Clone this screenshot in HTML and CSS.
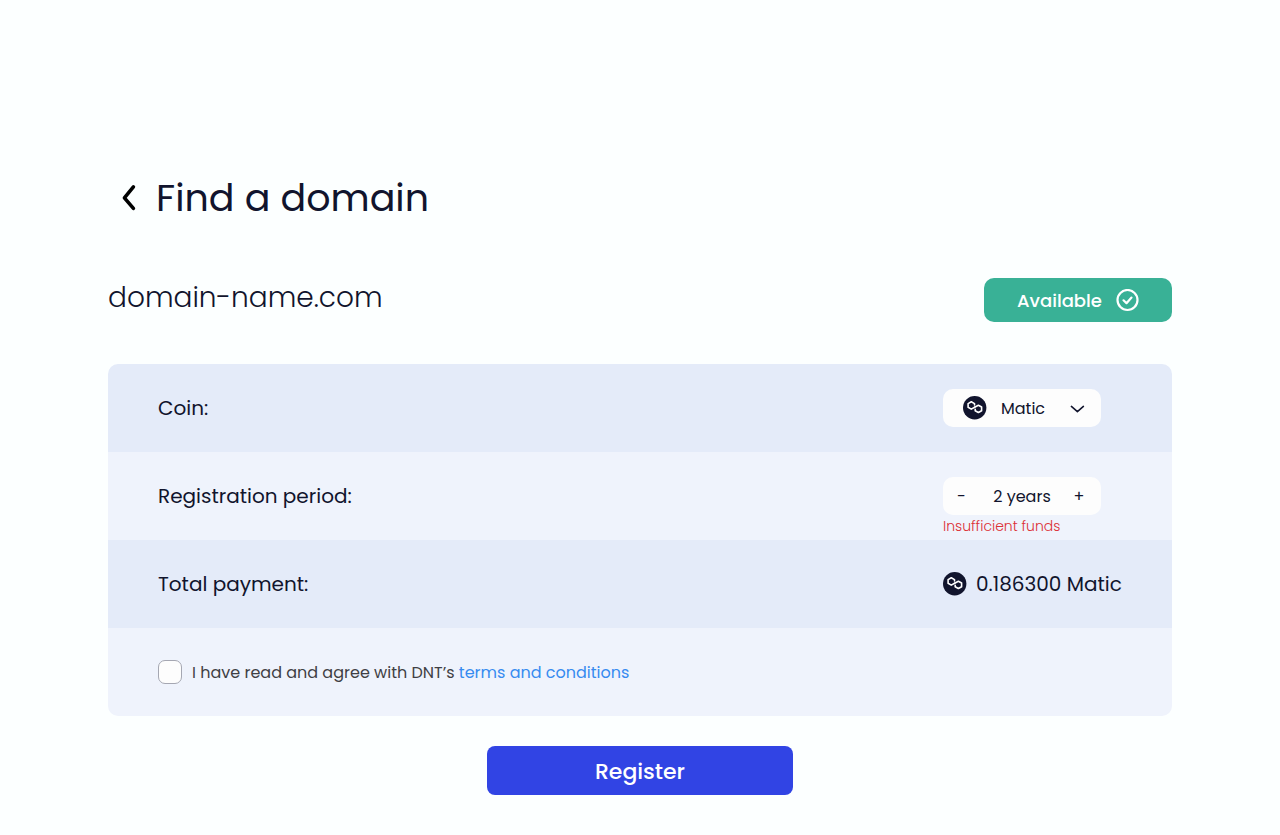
FILE: index.html
```html
<!DOCTYPE html>
<html lang="en">
<head>
    <meta charset="UTF-8">
    <meta name="viewport" content="width=device-width, initial-scale=1.0">
    <title>Find a domain</title>
    <link rel="stylesheet" href="styles.css">
</head>
<body>
    <svg width="0" height="0" class="symbols" aria-hidden="true">
        <symbol id="matic" viewBox="0 0 24 24">
            <circle cx="11.7" cy="11.8" r="11.7" fill="#11142d"/>
            <g fill="none" stroke="#fff" stroke-width="1.6" stroke-linejoin="round" stroke-linecap="round">
                <path d="M11.6 11.3 8.3 13.1 5.1 11.3V7.6L8.3 5.8 11.5 7.6V9"/>
                <path d="M11.6 11.3 15.4 9.2 18.6 11V14.7L15.4 16.5 12.2 14.7V13.3"/>
            </g>
        </symbol>
    </svg>

    <main class="page">
        <header class="title">
            <a href="#" class="back" aria-label="Back">
                <svg width="16" height="28" viewBox="0 0 16 28">
                    <path d="M13.4 2.8 4.4 13.8l9 10.6" fill="none" stroke="#000" stroke-width="3.6" stroke-linecap="round" stroke-linejoin="round"/>
                </svg>
            </a>
            <h1>Find a domain</h1>
        </header>

        <div class="domain">
            <h2>domain-name.com</h2>
            <div class="badge">
                <span>Available</span>
                <svg width="23" height="23" viewBox="0 0 23 23" fill="none" stroke="#fff" stroke-width="2.2" stroke-linecap="round" stroke-linejoin="round">
                    <circle cx="11.5" cy="11" r="10"/>
                    <path d="M7.5 11.3l3 2.9 5-5.6"/>
                </svg>
            </div>
        </div>

        <form>
            <div class="card">
                <div class="row">
                    <label class="name" for="coin">Coin:</label>
                    <div class="value">
                        <div class="box">
                            <select id="coin" class="coin">
                                <option>Matic</option>
                            </select>
                            <svg class="coin-icon" width="24" height="24"><use href="#matic"/></svg>
                            <svg class="arrow" width="16" height="10" viewBox="0 0 16 10">
                                <path d="M2.4 2.4l6 5.2 6-5.2" fill="none" stroke="#11142d" stroke-width="1.6" stroke-linecap="round" stroke-linejoin="round"/>
                            </svg>
                        </div>
                    </div>
                </div>
                <div class="row">
                    <span class="name">Registration period:</span>
                    <div class="value">
                        <div class="box period">
                            <button type="button" class="less" aria-label="Less">-</button>
                            <output>2 years</output>
                            <button type="button" aria-label="More">+</button>
                        </div>
                        <p class="error">Insufficient funds</p>
                    </div>
                </div>
                <div class="row">
                    <span class="name">Total payment:</span>
                    <div class="value total">
                        <svg width="24" height="24"><use href="#matic"/></svg>
                        <span>0.186300 Matic</span>
                    </div>
                </div>
                <div class="row agree">
                    <input type="checkbox" id="agree">
                    <label for="agree">I have read and agree with DNT’s <a href="#">terms and conditions</a></label>
                </div>
            </div>
            <button type="submit" class="register">Register</button>
        </form>
    </main>
</body>
</html>
```

FILE: styles.css
```css
* {
    box-sizing: border-box;
}
body {
    margin: 0;
    background: #fcffff;
    color: #11142d;
    font-family: Poppins, Inter, sans-serif;
    font-size: 16px;
}
h1, h2, p {
    margin: 0;
}
a {
    color: #368bf0;
    text-decoration: none;
}
button, select {
    font: inherit;
    color: inherit;
    border: none;
    background: none;
    cursor: pointer;
}
.symbols {
    position: absolute;
}
.page {
    max-width: 1280px;
    margin: 0 auto;
    padding: 168px 108px 40px;
}
.title {
    display: flex;
    align-items: center;
    gap: 20px;
    padding-left: 12px;
}
.title h1 {
    font-size: 38px;
    line-height: 60px;
    font-weight: 400;
}
.back svg {
    display: block;
}
.domain {
    display: flex;
    justify-content: space-between;
    align-items: flex-start;
    margin: 50px 0 42px;
}
.domain h2 {
    font-size: 28px;
    line-height: 40px;
    font-weight: 300;
}
.badge {
    display: flex;
    align-items: center;
    justify-content: center;
    gap: 14px;
    width: 188px;
    height: 44px;
    border-radius: 10px;
    background: #39b196;
    color: #fff;
    font-size: 18px;
    font-weight: 500;
}
.card {
    border-radius: 10px;
    overflow: hidden;
}
.row {
    display: flex;
    justify-content: space-between;
    min-height: 88px;
    padding: 25px 50px 0;
    background: #e4ebf9;
}
.row:nth-child(even) {
    background: #eff3fc;
}
.name, .total {
    font-size: 20px;
    line-height: 38px;
}
.value {
    width: 179px;
}
.box {
    position: relative;
    width: 158px;
    height: 38px;
    border-radius: 10px;
    background: #fdfdfd;
}
.coin {
    appearance: none;
    width: 100%;
    height: 100%;
    padding: 0 40px 0 58px;
}
.coin-icon, .arrow {
    position: absolute;
    pointer-events: none;
}
.coin-icon {
    top: 7px;
    left: 20px;
}
.arrow {
    top: 15px;
    right: 16px;
}
.period {
    display: flex;
    align-items: center;
    justify-content: space-between;
    padding: 0 14px;
}
.period button {
    padding: 0;
    width: 16px;
    text-align: center;
}
.period .less {
    text-align: left;
}
.error {
    color: #dc3035;
    font-size: 14px;
    line-height: 22px;
    font-weight: 300;
}
.total {
    display: flex;
    align-items: center;
    gap: 9px;
    height: 38px;
    white-space: nowrap;
}
.agree {
    justify-content: flex-start;
    align-items: center;
    gap: 10px;
    padding: 0 50px;
    color: #3f3f44;
}
.agree input {
    appearance: none;
    width: 24px;
    height: 24px;
    margin: 0;
    border: 1px solid #a5a7b2;
    border-radius: 7px;
    background: #fdfdfd;
}
.agree input:checked {
    background: #3144e4;
}
.register {
    display: block;
    width: 306px;
    height: 49px;
    margin: 30px auto 0;
    padding: 2px 0 0;
    border-radius: 8px;
    background: #3144e4;
    color: #fff;
    font-size: 22px;
    font-weight: 500;
}
```
